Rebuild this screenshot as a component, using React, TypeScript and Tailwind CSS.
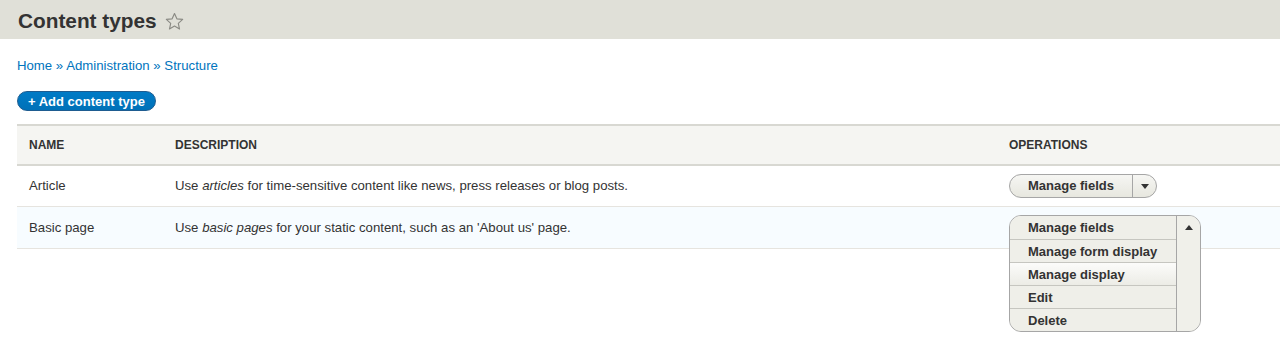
import React from "react";

const font = { fontFamily: '"Liberation Sans", Arial, sans-serif' };

function Star() {
  return (
    <svg width="19" height="19" viewBox="0 0 20 20" className="ml-[8px] mt-[3px]">
      <path
        d="M10 1.6l2.5 5.6 6.1.6-4.6 4.1 1.3 6-5.3-3.1-5.3 3.1 1.3-6L1.4 7.8l6.1-.6z"
        fill="none"
        stroke="#8a8a84"
        strokeWidth="1.2"
        strokeLinejoin="round"
      />
    </svg>
  );
}

function Caret({ up }: { up?: boolean }) {
  return (
    <svg width="8" height="5" viewBox="0 0 8 5">
      <path d={up ? "M0 5L4 0l4 5z" : "M0 0h8L4 5z"} fill="#333" />
    </svg>
  );
}

const btnBg = "bg-gradient-to-b from-[#f6f6f3] to-[#e7e7df]";

function DropButton() {
  return (
    <div className={`flex h-[24px] w-[148px] rounded-[12px] border border-[#a6a6a6] ${btnBg}`}>
      <div className="flex flex-1 items-center pl-[18px] text-[13px] font-bold text-[#333]">Manage fields</div>
      <div className="flex w-[24px] items-center justify-center border-l border-[#a6a6a6]">
        <Caret />
      </div>
    </div>
  );
}

function OpenDropButton() {
  const items = ["Manage fields", "Manage form display", "Manage display", "Edit", "Delete"];
  return (
    <div className={`absolute left-[12px] top-[8px] z-10 flex w-[192px] overflow-hidden rounded-[12px] border border-[#a6a6a6] ${btnBg}`}>
      <div className="flex flex-1 flex-col">
        {items.map((t, i) => (
          <div
            key={t}
            className={`flex h-[23px] items-center pl-[18px] text-[13px] font-bold text-[#333] ${
              i > 0 ? "border-t border-[#c6c6c0]" : ""
            } ${i === 2 ? "bg-gradient-to-b from-[#fcfcfa] to-[#ecece6]" : "bg-[#efefe9]"}`}
          >
            {t}
          </div>
        ))}
      </div>
      <div className="flex w-[24px] justify-center border-l border-[#a6a6a6] bg-[#f0f0ea] pt-[9px]">
        <div className="h-[5px]">
          <Caret up />
        </div>
      </div>
    </div>
  );
}

export default function App() {
  return (
    <div className="h-[347px] w-[1280px] overflow-hidden bg-white text-[#333]" style={font}>
      <div className="flex h-[39px] items-center bg-[#e0e0d8] pl-[18px]">
        <h1 className="mt-[3px] text-[20.8px] font-bold leading-none text-[#333]">Content types</h1>
        <Star />
      </div>

      <div className="pl-[17px]">
        <div className="mt-[17px] text-[13.2px] text-[#0074bd]">
          <a>Home</a> » <a>Administration</a> » <a>Structure</a>
        </div>

        <div className="mt-[13px]">
          <button className="h-[20px] rounded-full border border-[#1e5c90] bg-gradient-to-b from-[#007bc6] to-[#0071b8] px-[10px] text-[13px] font-bold leading-none text-white">
            + Add content type
          </button>
        </div>

        <table className="mt-[11px] w-[1263px] border-collapse text-[13.2px]">
          <thead>
            <tr className="h-[40px] border-y-2 border-[#d8d8d2] bg-[#f5f5f2] text-left">
              <th className="w-[146px] pl-[12px] text-[12px] font-bold uppercase">Name</th>
              <th className="w-[834px] pl-[12px] text-[12px] font-bold uppercase">Description</th>
              <th className="pl-[12px] text-[12px] font-bold uppercase">Operations</th>
            </tr>
          </thead>
          <tbody>
            <tr className="h-[42px] border-b border-[#e6e4df] bg-white">
              <td className="pl-[12px]">Article</td>
              <td className="pl-[12px]">
                Use <em>articles</em> for time-sensitive content like news, press releases or blog posts.
              </td>
              <td className="pl-[12px]">
                <DropButton />
              </td>
            </tr>
            <tr className="h-[42px] border-b border-[#e6e4df] bg-[#f7fcff]">
              <td className="pl-[12px]">Basic page</td>
              <td className="pl-[12px]">
                Use <em>basic pages</em> for your static content, such as an 'About us' page.
              </td>
              <td className="relative pl-[12px]">
                <OpenDropButton />
              </td>
            </tr>
          </tbody>
        </table>
      </div>
    </div>
  );
}
